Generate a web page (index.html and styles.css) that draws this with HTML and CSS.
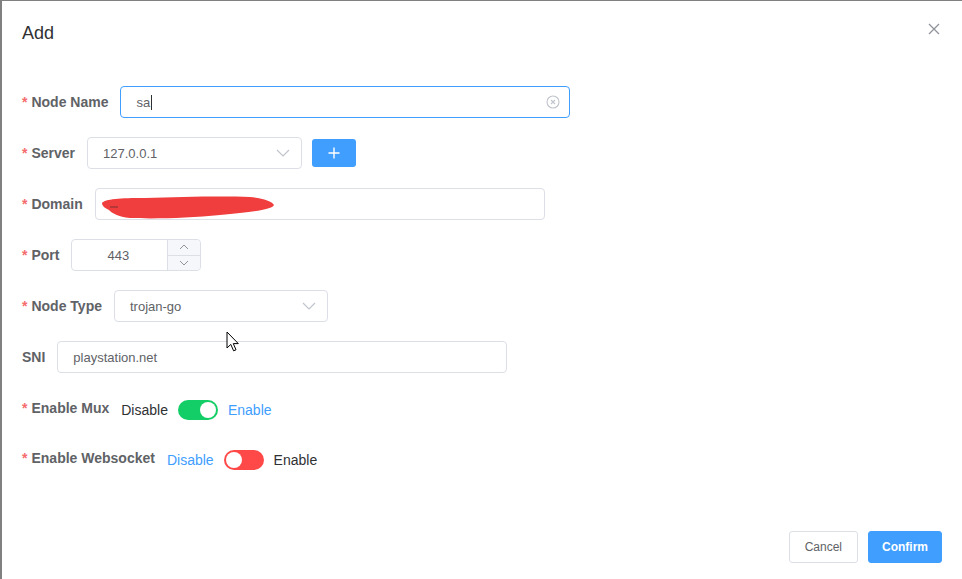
FILE: index.html
```html
<!DOCTYPE html>
<html>
<head>
<meta charset="utf-8">
<title>Add</title>
<link rel="stylesheet" href="styles.css">
</head>
<body>
<div class="dialog">
  <div class="dialog-header">
    <span class="dialog-title">Add</span>
    <span class="close-btn">
      <svg width="16" height="16" viewBox="0 0 16 16"><path d="M3 3 L13 13 M13 3 L3 13" stroke="#909399" stroke-width="1.3" fill="none"/></svg>
    </span>
  </div>
  <div class="dialog-body">
    <div class="form">
      <div class="item">
        <label class="label"><span class="req">*</span>Node Name</label>
        <div class="input input-focus w450">
          <span class="val">sa</span><span class="caret"></span>
          <span class="suffix">
            <svg width="14" height="14" viewBox="0 0 14 14"><circle cx="7" cy="7" r="6" stroke="#c0c4cc" stroke-width="1.1" fill="none"/><path d="M5 5 L9 9 M9 5 L5 9" stroke="#c0c4cc" stroke-width="1.1"/></svg>
          </span>
        </div>
      </div>
      <div class="item">
        <label class="label"><span class="req">*</span>Server</label>
        <div class="input select w215">
          <span class="val">127.0.0.1</span>
          <span class="arrow"><svg width="14" height="8" viewBox="0 0 14 8"><path d="M1 1 L7 7 L13 1" stroke="#c0c4cc" stroke-width="1.2" fill="none"/></svg></span>
        </div>
        <button class="btn-plus" type="button"><svg width="12" height="12" viewBox="0 0 12 12"><path d="M6 0.5 V11.5 M0.5 6 H11.5" stroke="#fff" stroke-width="1.4"/></svg></button>
      </div>
      <div class="item">
        <label class="label"><span class="req">*</span>Domain</label>
        <div class="input w450 scribble-host">
          <svg class="scribble" width="176" height="26" viewBox="0 0 176 26"><path d="M2 8 C5 4 20 3 45 3 C80 2 120 1 150 2 C162 3 172 6 174 10 C172 15 150 17 120 20 C90 23 55 24 30 23 C18 22 12 18 9 15 C5 13 2 11 2 8 Z" fill="#f03e3e"/><path d="M10 12 L18 12" stroke="#7a3030" stroke-width="1"/></svg>
        </div>
      </div>
      <div class="item">
        <label class="label"><span class="req">*</span>Port</label>
        <div class="input number w130">
          <span class="num-val">443</span>
          <span class="num-ctrl">
            <span class="num-up"><svg width="10" height="6" viewBox="0 0 10 6"><path d="M1 5 L5 1 L9 5" stroke="#909399" stroke-width="1" fill="none"/></svg></span>
            <span class="num-down"><svg width="10" height="6" viewBox="0 0 10 6"><path d="M1 1 L5 5 L9 1" stroke="#909399" stroke-width="1" fill="none"/></svg></span>
          </span>
        </div>
      </div>
      <div class="item">
        <label class="label"><span class="req">*</span>Node Type</label>
        <div class="input select w214">
          <span class="val">trojan-go</span>
          <span class="arrow"><svg width="14" height="8" viewBox="0 0 14 8"><path d="M1 1 L7 7 L13 1" stroke="#c0c4cc" stroke-width="1.2" fill="none"/></svg></span>
        </div>
      </div>
      <div class="item">
        <label class="label">SNI</label>
        <div class="input w450"><span class="val">playstation.net</span></div>
      </div>
      <div class="item switch-row mux-row">
        <label class="label"><span class="req">*</span>Enable Mux</label>
        <div class="switch-wrap">
          <span class="sw-text">Disable</span>
          <span class="switch on"><span class="knob"></span></span>
          <span class="sw-text active">Enable</span>
        </div>
      </div>
      <div class="item switch-row last">
        <label class="label"><span class="req">*</span>Enable Websocket</label>
        <div class="switch-wrap">
          <span class="sw-text active">Disable</span>
          <span class="switch off"><span class="knob"></span></span>
          <span class="sw-text">Enable</span>
        </div>
      </div>
    </div>
  </div>
  <div class="dialog-footer">
    <button class="btn btn-default" type="button">Cancel</button>
    <button class="btn btn-primary" type="button">Confirm</button>
  </div>
</div>
<svg class="cursor" width="14" height="22" viewBox="0 0 14 22"><path d="M1 1 L1 17 L4.8 13.4 L7.6 19.8 L10 18.8 L7.3 12.6 L12.3 12.6 Z" fill="#fff" stroke="#000" stroke-width="1" stroke-linejoin="round"/></svg>
</body>
</html>
```

FILE: styles.css
```css
html, body {
  margin: 0;
  padding: 0;
  height: 100%;
  overflow: hidden;
}
body {
  background: #808080;
  font-family: "Liberation Sans", Arial, Helvetica, sans-serif;
  position: relative;
}
.dialog {
  margin: 1px 0 0 2px;
  width: 960px;
  background: #fff;
}
.dialog-header {
  display: flex;
  justify-content: space-between;
  align-items: flex-start;
  padding: 20px 20px 10px;
}
.dialog-title {
  font-size: 18px;
  line-height: 24px;
  color: #303133;
}
.close-btn {
  display: flex;
  width: 16px;
  height: 16px;
}
.dialog-body {
  padding: 31px 20px 30px;
}
.form {
  display: flex;
  flex-direction: column;
}
.item {
  display: flex;
  align-items: center;
  height: 32px;
  margin-bottom: 19px;
}
.item.switch-row {
  height: 36px;
}
.item.mux-row {
  margin-bottom: 14px;
}
.item.last {
  margin-bottom: 0;
}
.label {
  font-size: 14px;
  font-weight: bold;
  color: #606266;
  line-height: 32px;
  padding-right: 12px;
  white-space: nowrap;
}
.switch-row .label {
  margin-bottom: 4px;
}
.req {
  color: #f56c6c;
  margin-right: 4px;
}
.input {
  box-sizing: border-box;
  height: 32px;
  border: 1px solid #dcdfe6;
  border-radius: 4px;
  padding: 0 15px;
  display: flex;
  align-items: center;
  font-size: 13px;
  color: #606266;
  position: relative;
  background: #fff;
}
.input-focus {
  border-color: #409eff;
}
.w450 { width: 450px; }
.w215 { width: 215px; }
.w214 { width: 214px; }
.w130 { width: 130px; }
.val {
  white-space: nowrap;
}
.caret {
  width: 1px;
  height: 15px;
  background: #303133;
  margin-left: 1px;
}
.suffix {
  margin-left: auto;
  margin-right: -6px;
  display: flex;
}
.select .arrow {
  margin-left: auto;
  margin-right: -4px;
  display: flex;
}
.btn-plus {
  margin-left: 10px;
  width: 44px;
  height: 28px;
  border: none;
  border-radius: 3px;
  background: #409eff;
  display: flex;
  align-items: center;
  justify-content: center;
  padding: 0;
}
.scribble {
  position: absolute;
  left: 4px;
  top: 6px;
}
.number {
  padding: 0;
}
.num-val {
  flex: 1;
  text-align: center;
  padding-left: 15px;
  padding-right: 18px;
}
.num-ctrl {
  width: 32px;
  height: 30px;
  border-left: 1px solid #dcdfe6;
  background: #f5f7fa;
  display: flex;
  flex-direction: column;
  border-radius: 0 4px 4px 0;
}
.num-up, .num-down {
  flex: 1;
  display: flex;
  align-items: center;
  justify-content: center;
}
.num-up {
  border-bottom: 1px solid #dcdfe6;
}
.switch-wrap {
  display: flex;
  align-items: center;
  height: 20px;
}
.sw-text {
  font-size: 14px;
  color: #303133;
}
.sw-text.active {
  color: #409eff;
}
.switch {
  width: 40px;
  height: 20px;
  border-radius: 10px;
  margin: 0 10px;
  display: flex;
  align-items: center;
  box-sizing: border-box;
  padding: 0 2px;
}
.switch.on {
  background: #13ce66;
  justify-content: flex-end;
}
.switch.off {
  background: #ff4949;
  justify-content: flex-start;
}
.knob {
  width: 16px;
  height: 16px;
  border-radius: 50%;
  background: #fff;
}
.dialog-footer {
  display: flex;
  justify-content: flex-end;
  gap: 10px;
  padding: 23px 20px 20px;
}
.btn {
  box-sizing: border-box;
  height: 32px;
  border-radius: 3px;
  font-size: 12px;
  font-family: "Liberation Sans", Arial, sans-serif;
  padding: 0 15px;
  cursor: pointer;
}
.btn-default {
  background: #fff;
  border: 1px solid #dcdfe6;
  color: #606266;
}
.btn-primary {
  background: #409eff;
  border: 1px solid #409eff;
  color: #fff;
  font-weight: bold;
  padding: 0 13px;
}
.cursor {
  position: absolute;
  left: 226px;
  top: 331px;
}
```
